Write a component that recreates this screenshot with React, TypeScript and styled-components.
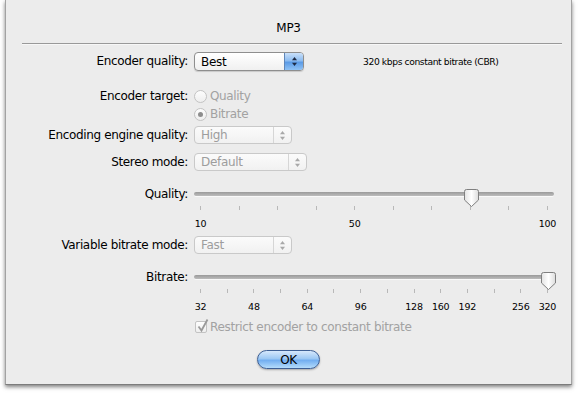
import styled, { createGlobalStyle } from 'styled-components';

const GlobalStyle = createGlobalStyle`
  html, body {
    margin: 0;
    padding: 0;
    background: #ffffff;
  }
  body {
    font-family: 'DejaVu Sans', 'Liberation Sans', sans-serif;
    color: #000;
  }
`;

const qualityStops = [10, 20, 30, 40, 50, 60, 70, 80, 90, 100];
const qualityLabels = [10, 50, 100];
const bitrateStops = [32, 40, 48, 56, 64, 80, 96, 112, 128, 160, 192, 224, 256, 320];
const bitrateLabels = [32, 48, 64, 96, 128, 160, 192, 256, 320];

const Page = styled.div`
  height: 396px;
  padding-left: 5px;
  box-sizing: border-box;
`;

const Sheet = styled.div`
  width: 567px;
  height: 385px;
  box-sizing: border-box;
  background: #ececec;
  border: 1px solid #a2a2a2;
  border-top: none;
  border-bottom-color: #7c7c7c;
  box-shadow: 0 2px 4px rgba(0, 0, 0, 0.5);
  display: flex;
  flex-direction: column;
  overflow: hidden;
`;

const Title = styled.div`
  padding-top: 21px;
  line-height: 15px;
  font-size: 12px;
  letter-spacing: -0.3px;
  text-align: center;
`;

const Separator = styled.div`
  margin: 7px 9px 0 16px;
  height: 1px;
  background: #999;
  border-bottom: 1px solid #f7f7f7;
`;

const Row = styled.div<{ $mt: number; $h: number; $top?: boolean }>`
  display: grid;
  grid-template-columns: 182px 1fr;
  column-gap: 6px;
  align-items: ${(p) => (p.$top ? 'start' : 'center')};
  margin-top: ${(p) => p.$mt}px;
  min-height: ${(p) => p.$h}px;
`;

const Label = styled.div<{ $lh?: number }>`
  text-align: right;
  font-size: 12px;
  letter-spacing: -0.35px;
  white-space: nowrap;
  line-height: ${(p) => p.$lh ?? 15}px;
`;

const Controls = styled.div`
  display: flex;
  align-items: center;
`;

const Note = styled.span`
  margin-left: 59px;
  font-size: 9.2px;
  letter-spacing: -0.4px;
  white-space: nowrap;
`;

const PopUpBox = styled.div<{ $w: number; $h: number; $disabled?: boolean }>`
  width: ${(p) => p.$w}px;
  height: ${(p) => p.$h}px;
  box-sizing: border-box;
  display: flex;
  align-items: stretch;
  border: 1px solid ${(p) => (p.$disabled ? '#c9c9c9' : '#8e8e8e')};
  border-radius: 4px;
  background: ${(p) =>
    p.$disabled ? 'linear-gradient(#fbfbfb, #f1f1f1)' : 'linear-gradient(#ffffff, #f0f0f0)'};
  box-shadow: ${(p) => (p.$disabled ? 'none' : '0 1px 1px rgba(0,0,0,0.15)')};
  overflow: hidden;
`;

const PopUpValue = styled.span<{ $disabled?: boolean }>`
  flex: 1;
  padding-left: 6px;
  font-size: 12px;
  letter-spacing: -0.3px;
  display: flex;
  align-items: center;
  color: ${(p) => (p.$disabled ? '#9d9d9d' : '#000')};
`;

const Stepper = styled.span<{ $disabled?: boolean }>`
  width: ${(p) => (p.$disabled ? 17 : 18)}px;
  display: flex;
  align-items: center;
  justify-content: center;
  border-left: 1px solid ${(p) => (p.$disabled ? '#d6d6d6' : '#5f86b8')};
  background: ${(p) =>
    p.$disabled
      ? 'transparent'
      : 'linear-gradient(#c9e0fa 0%, #8dbcf0 45%, #5b9be6 55%, #8fc2f5 100%)'};
`;

const PopUp = ({ value, w, h = 18, disabled }: { value: string; w: number; h?: number; disabled?: boolean }) => (
  <PopUpBox $w={w} $h={h} $disabled={disabled}>
    <PopUpValue $disabled={disabled}>{value}</PopUpValue>
    <Stepper $disabled={disabled}>
      <svg width="7" height="11" viewBox="0 0 7 11">
        <path d="M3.5 1 L6 4.2 H1 Z" fill={disabled ? '#a8a8a8' : '#1d2a44'} />
        <path d="M3.5 10 L6 6.8 H1 Z" fill={disabled ? '#a8a8a8' : '#1d2a44'} />
      </svg>
    </Stepper>
  </PopUpBox>
);

const RadioGroup = styled.div`
  display: flex;
  flex-direction: column;
`;

const Choice = styled.label`
  display: flex;
  align-items: center;
  height: 18px;
  gap: 3px;
  font-size: 12px;
  letter-spacing: -0.35px;
  color: #a2a2a2;
`;

const RadioDot = styled.span<{ $on?: boolean }>`
  width: 13px;
  height: 13px;
  box-sizing: border-box;
  border-radius: 50%;
  border: 1px solid #c3c3c3;
  background: linear-gradient(#fdfdfd, #eeeeee);
  display: flex;
  align-items: center;
  justify-content: center;
  &::after {
    content: '';
    width: 5px;
    height: 5px;
    border-radius: 50%;
    background: ${(p) => (p.$on ? '#8d8d8d' : 'transparent')};
  }
`;

const CheckBox = styled.span`
  width: 12px;
  height: 12px;
  box-sizing: border-box;
  border: 1px solid #c3c3c3;
  border-radius: 2px;
  background: linear-gradient(#fdfdfd, #eeeeee);
  position: relative;
  margin-left: 1px;
  & svg {
    position: absolute;
    left: 0px;
    top: -4px;
  }
`;

const SliderBox = styled.div`
  width: 360px;
  display: flex;
  flex-direction: column;
`;

const TrackZone = styled.div`
  position: relative;
  height: 19px;
`;

const Track = styled.div`
  margin-top: 5px;
  height: 4px;
  border-radius: 2px;
  background: linear-gradient(#9a9a9a, #bcbcbc);
  box-shadow: 0 1px 0 rgba(255, 255, 255, 0.7);
`;

const Thumb = styled.svg`
  position: absolute;
  top: 2px;
  z-index: 1;
`;

const Scale = styled.div`
  display: flex;
  justify-content: space-between;
  padding: 0 6px;
`;

const Slot = styled.div`
  width: 1px;
  display: flex;
  flex-direction: column;
  align-items: center;
`;

const Tick = styled.span`
  width: 1px;
  height: 4px;
  background: #b8b8b8;
`;

const TickLabel = styled.span`
  margin-top: 7px;
  font-size: 9.5px;
  letter-spacing: -0.2px;
  line-height: 13px;
  min-height: 13px;
  white-space: nowrap;
`;

const Slider = ({ stops, labels, value }: { stops: number[]; labels: number[]; value: number }) => {
  const frac = stops.indexOf(value) / (stops.length - 1);
  return (
    <SliderBox>
      <TrackZone>
        <Track />
        <Thumb width="15" height="19" viewBox="0 0 15 19" style={{ left: 6 + frac * 348 - 7 }}>
          <defs>
            <linearGradient id={`tg${value}`} x1="0" y1="0" x2="1" y2="0">
              <stop offset="0" stopColor="#e2e2e2" />
              <stop offset="0.5" stopColor="#ffffff" />
              <stop offset="1" stopColor="#dcdcdc" />
            </linearGradient>
          </defs>
          <path
            d="M2.5 0.5 H12.5 Q14.5 0.5 14.5 2.5 V11 L7.5 17.5 L0.5 11 V2.5 Q0.5 0.5 2.5 0.5 Z"
            fill={`url(#tg${value})`}
            stroke="#7f7f7f"
          />
        </Thumb>
      </TrackZone>
      <Scale>
        {stops.map((s) => (
          <Slot key={s}>
            <Tick />
            <TickLabel>{labels.includes(s) ? s : ''}</TickLabel>
          </Slot>
        ))}
      </Scale>
    </SliderBox>
  );
};

const ButtonRow = styled.div`
  margin-top: 14px;
  display: flex;
  justify-content: center;
`;

const OkButton = styled.button`
  width: 63px;
  height: 19px;
  padding: 0;
  border: 1px solid #3d5f95;
  border-radius: 10px;
  background: linear-gradient(#d6e8fc 0%, #9cc8f4 45%, #72aef0 55%, #b4dcfc 100%);
  box-shadow: 0 1px 2px rgba(0, 0, 0, 0.3);
  font-family: 'DejaVu Sans', sans-serif;
  font-size: 12px;
  letter-spacing: -0.3px;
  color: #000;
`;

export default function App() {
  return (
    <Page>
      <GlobalStyle />
      <Sheet>
        <Title>MP3</Title>
        <Separator />

        <Row $mt={7} $h={19}>
          <Label>Encoder quality:</Label>
          <Controls>
            <PopUp value="Best" w={110} h={19} />
            <Note>320 kbps constant bitrate (CBR)</Note>
          </Controls>
        </Row>

        <Row $mt={16} $h={36} $top>
          <Label $lh={18}>Encoder target:</Label>
          <RadioGroup>
            <Choice>
              <RadioDot />
              Quality
            </Choice>
            <Choice>
              <RadioDot $on />
              Bitrate
            </Choice>
          </RadioGroup>
        </Row>

        <Row $mt={3} $h={18}>
          <Label>Encoding engine quality:</Label>
          <Controls>
            <PopUp value="High" w={98} disabled />
          </Controls>
        </Row>

        <Row $mt={9} $h={18}>
          <Label>Stereo mode:</Label>
          <Controls>
            <PopUp value="Default" w={113} disabled />
          </Controls>
        </Row>

        <Row $mt={16} $h={44} $top>
          <Label $lh={14}>Quality:</Label>
          <Slider stops={qualityStops} labels={qualityLabels} value={80} />
        </Row>

        <Row $mt={5} $h={18}>
          <Label>Variable bitrate mode:</Label>
          <Controls>
            <PopUp value="Fast" w={98} disabled />
          </Controls>
        </Row>

        <Row $mt={16} $h={44} $top>
          <Label $lh={14}>Bitrate:</Label>
          <Slider stops={bitrateStops} labels={bitrateLabels} value={320} />
        </Row>

        <Row $mt={4} $h={16}>
          <span />
          <Choice>
            <CheckBox>
              <svg width="13" height="15" viewBox="0 0 13 15">
                <path d="M2.5 8.5 L5.5 12.5 L11.5 1.5" fill="none" stroke="#9a9a9a" strokeWidth="1.8" />
              </svg>
            </CheckBox>
            Restrict encoder to constant bitrate
          </Choice>
        </Row>

        <ButtonRow>
          <OkButton>OK</OkButton>
        </ButtonRow>
      </Sheet>
    </Page>
  );
}
